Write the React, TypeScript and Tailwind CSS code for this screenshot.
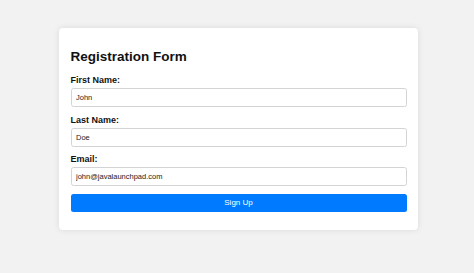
export default function App() {
  const fields = [
    { label: "First Name:", value: "John" },
    { label: "Last Name:", value: "Doe" },
    { label: "Email:", value: "john@javalaunchpad.com" },
  ];

  return (
    <div className="min-h-[273px] bg-[#f2f2f2] pt-[28px] font-['Liberation_Sans',Arial,sans-serif]">
      <div className="ml-[59px] w-[359px] rounded-[4px] bg-white px-[11.5px] pt-[20.5px] pb-[18px] shadow-[0_0_6px_rgba(0,0,0,0.1)]">
        <h2 className="mb-[11px] text-[13.5px] leading-[15.5px] font-bold text-[#111]">Registration Form</h2>
        <form onSubmit={(e) => e.preventDefault()}>
          {fields.map((f) => (
            <div key={f.label} className="mb-[7.3px]">
              <label className="mb-[3px] block text-[9px] leading-[10.4px] font-bold text-[#111]">{f.label}</label>
              <input
                defaultValue={f.value}
                className="block h-[18.8px] w-full rounded-[2.5px] border border-[#d4d4d4] bg-white px-[4.5px] text-[7.5px] text-[#222] outline-none"
              />
            </div>
          ))}
          <button
            type="submit"
            className="mt-[1.3px] block h-[18px] w-full rounded-[2.5px] bg-[#007bff] text-[8px] text-white"
          >
            Sign Up
          </button>
        </form>
      </div>
    </div>
  );
}
